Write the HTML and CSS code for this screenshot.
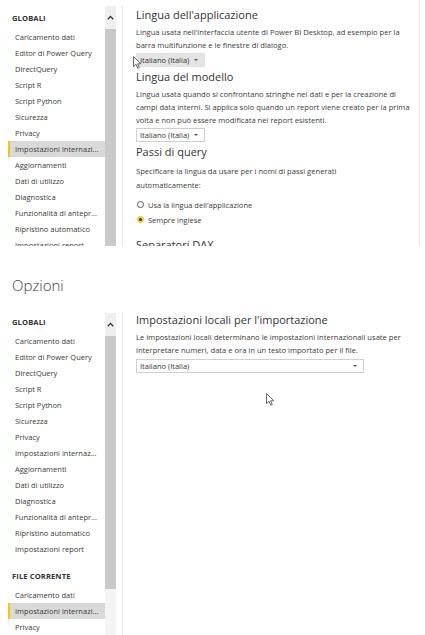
FILE: index.html
```html
<!DOCTYPE html>
<html lang="it">
<head>
<meta charset="utf-8">
<title>Opzioni</title>
<link rel="stylesheet" href="styles.css">
</head>
<body>
<div class="page">
  <section class="panel panel-top">
    <nav class="nav">
      <div class="group">
        <div class="group-title">GLOBALI</div>
        <ul class="items">
          <li>Caricamento dati</li>
          <li>Editor di Power Query</li>
          <li>DirectQuery</li>
          <li>Script R</li>
          <li>Script Python</li>
          <li>Sicurezza</li>
          <li>Privacy</li>
          <li class="selected">Impostazioni internazi...</li>
          <li>Aggiornamenti</li>
          <li>Dati di utilizzo</li>
          <li>Diagnostica</li>
          <li>Funzionalità di antepr...</li>
          <li>Ripristino automatico</li>
          <li>Impostazioni report</li>
        </ul>
      </div>
    </nav>
    <div class="scrollbar">
      <div class="scroll-up"><svg width="7" height="5" viewBox="0 0 7 5"><path d="M0.8 4.2 L3.5 1.4 L6.2 4.2" fill="none" stroke="#333" stroke-width="1.3"/></svg></div>
      <div class="thumb"></div>
    </div>
    <div class="divider"></div>
    <div class="content content-top">
      <h2 class="heading">Lingua dell'applicazione</h2>
      <p class="desc">Lingua usata nell'interfaccia utente di Power BI Desktop, ad esempio per la barra multifunzione e le finestre di dialogo.</p>
      <div class="select select-small select-hover"><span>Italiano (Italia)</span><span class="caret"></span></div>
      <h2 class="heading">Lingua del modello</h2>
      <p class="desc">Lingua usata quando si confrontano stringhe nei dati e per la creazione di campi data interni. Si applica solo quando un report viene creato per la prima volta e non può essere modificata nei report esistenti.</p>
      <div class="select select-small"><span>Italiano (Italia)</span><span class="caret"></span></div>
      <h2 class="heading">Passi di query</h2>
      <p class="desc desc-narrow">Specificare la lingua da usare per i nomi di passi generati automaticamente:</p>
      <div class="radios">
        <label class="radio"><span class="dot"></span>Usa la lingua dell'applicazione</label>
        <label class="radio"><span class="dot dot-on"></span>Sempre inglese</label>
      </div>
      <h2 class="heading heading-next">Separatori DAX</h2>
    </div>
  </section>

  <h1 class="title">Opzioni</h1>

  <section class="panel panel-bottom">
    <nav class="nav">
      <div class="group">
        <div class="group-title">GLOBALI</div>
        <ul class="items">
          <li>Caricamento dati</li>
          <li>Editor di Power Query</li>
          <li>DirectQuery</li>
          <li>Script R</li>
          <li>Script Python</li>
          <li>Sicurezza</li>
          <li>Privacy</li>
          <li>Impostazioni internaz...</li>
          <li>Aggiornamenti</li>
          <li>Dati di utilizzo</li>
          <li>Diagnostica</li>
          <li>Funzionalità di antepr...</li>
          <li>Ripristino automatico</li>
          <li>Impostazioni report</li>
        </ul>
      </div>
      <div class="group group-next">
        <div class="group-title">FILE CORRENTE</div>
        <ul class="items">
          <li>Caricamento dati</li>
          <li class="selected">Impostazioni internazi...</li>
          <li>Privacy</li>
        </ul>
      </div>
    </nav>
    <div class="scrollbar">
      <div class="scroll-up"><svg width="7" height="5" viewBox="0 0 7 5"><path d="M0.8 4.2 L3.5 1.4 L6.2 4.2" fill="none" stroke="#333" stroke-width="1.3"/></svg></div>
      <div class="thumb thumb-bottom"></div>
      <div class="track"></div>
    </div>
    <div class="divider"></div>
    <div class="content content-bottom">
      <h2 class="heading">Impostazioni locali per l'importazione</h2>
      <p class="desc">Le impostazioni locali determinano le impostazioni internazionali usate per interpretare numeri, data e ora in un testo importato per il file.</p>
      <div class="select select-wide"><span>Italiano (Italia)</span><span class="caret"></span></div>
    </div>
  </section>

  <svg class="cursor cursor-top" width="9" height="13" viewBox="0 0 9 13"><path d="M0.5 0.5 L0.5 10.5 L3 8.3 L4.8 12.2 L6.3 11.5 L4.6 7.8 L7.8 7.8 Z" fill="#fff" stroke="#555" stroke-width="0.9" stroke-linejoin="round"/></svg>
  <svg class="cursor cursor-bottom" width="9" height="13" viewBox="0 0 9 13"><path d="M0.5 0.5 L0.5 10.5 L3 8.3 L4.8 12.2 L6.3 11.5 L4.6 7.8 L7.8 7.8 Z" fill="#fff" stroke="#555" stroke-width="0.9" stroke-linejoin="round"/></svg>
</div>
</body>
</html>
```

FILE: styles.css
```css
* {
  box-sizing: border-box;
}

html, body {
  margin: 0;
  padding: 0;
  background: #ffffff;
}

body {
  font-family: "Open Sans", "Noto Sans", "DejaVu Sans", sans-serif;
  color: #333333;
}

.page {
  position: relative;
  width: 425px;
  height: 635px;
  overflow: hidden;
}

.panel {
  display: flex;
  align-items: stretch;
}

.panel-top {
  height: 246px;
  overflow: hidden;
}

.panel-bottom {
  height: 329px;
  overflow: hidden;
}

/* ---------- navigation ---------- */

.nav {
  width: 105px;
  flex: none;
  padding-top: 10px;
}

.panel-bottom .nav {
  padding-top: 8px;
}

.group-title {
  padding-left: 12px;
  font-size: 7.6px;
  font-weight: 700;
  line-height: 16px;
  letter-spacing: 0.1px;
  color: #333333;
}

.group-next {
  margin-top: 11px;
}

.items {
  list-style: none;
  margin: 3px 0 0 10px;
  padding: 0;
}

.group-next .items {
  margin-top: 3px;
}

.items li {
  height: 16px;
  line-height: 16px;
  padding-left: 5px;
  font-size: 7.5px;
  color: #3a3a3a;
  white-space: nowrap;
  overflow: hidden;
  border-left: 2px solid transparent;
  margin-left: -2px;
}

.items li.selected {
  background: #d9d9d9;
  border-left-color: #f2c811;
}

/* ---------- scrollbar ---------- */

.scrollbar {
  width: 11px;
  flex: none;
  display: flex;
  flex-direction: column;
  margin-top: 7px;
}

.panel-top .scrollbar {
  margin-top: 6px;
}

.scroll-up {
  height: 23px;
  background: #efefef;
  display: flex;
  align-items: center;
  justify-content: center;
}

.thumb {
  flex: 1;
  background: #c9c9c9;
}

.thumb-bottom {
  flex: none;
  height: 253px;
}

.track {
  flex: 1;
  background: #f4f4f4;
}

.divider {
  width: 1px;
  flex: none;
  margin-left: 6px;
  margin-top: 6px;
  background: #e6e6e6;
}

/* ---------- content ---------- */

.content {
  flex: 1;
  padding-left: 13px;
  padding-right: 8px;
}

.content-top {
  padding-top: 5px;
  border-right: 1px solid #e4e4e4;
  margin-right: 5px;
}

.content-bottom {
  padding-top: 4px;
}

.heading {
  margin: 0;
  font-size: 11px;
  font-weight: 400;
  line-height: 20px;
  color: #333333;
  white-space: nowrap;
}

.heading-next {
  margin-top: 8px;
}

.desc {
  margin: 1px 0 0 0;
  font-size: 7.6px;
  line-height: 13px;
  color: #3a3a3a;
}

.desc-narrow {
  max-width: 250px;
  margin-top: 2px;
  line-height: 14px;
}

.select {
  display: flex;
  align-items: center;
  justify-content: space-between;
  height: 14px;
  margin-top: 1px;
  padding: 0 6px 0 3px;
  font-size: 7.5px;
  color: #333333;
  border: 1px solid #cfcfcf;
  background: #ffffff;
}

.select-small {
  width: 69px;
}

.select-hover {
  background: #e3e3e3;
  border-color: #e3e3e3;
}

.select-wide {
  width: 228px;
  margin-top: 2px;
}

.caret {
  width: 0;
  height: 0;
  border-left: 2px solid transparent;
  border-right: 2px solid transparent;
  border-top: 2px solid #555555;
}

.radios {
  margin-top: 5px;
  display: flex;
  flex-direction: column;
}

.radio {
  display: flex;
  align-items: center;
  height: 15px;
  font-size: 7.5px;
  color: #3a3a3a;
}

.dot {
  width: 7px;
  height: 7px;
  margin: 0 4px 0 1px;
  border: 1px solid #555555;
  border-radius: 50%;
  background: #ffffff;
  display: flex;
  align-items: center;
  justify-content: center;
}

.dot-on {
  border-color: #e7c21a;
  background: #f4d64c;
}

.dot-on::after {
  content: "";
  width: 3px;
  height: 3px;
  border-radius: 50%;
  background: #333333;
}

/* ---------- title ---------- */

.title {
  margin: 27px 0 9px 12px;
  font-size: 15px;
  font-weight: 300;
  line-height: 24px;
  color: #3c3c3c;
}

/* ---------- cursors ---------- */

.cursor {
  position: absolute;
}

.cursor-top {
  left: 133px;
  top: 56px;
}

.cursor-bottom {
  left: 266px;
  top: 393px;
}
```
